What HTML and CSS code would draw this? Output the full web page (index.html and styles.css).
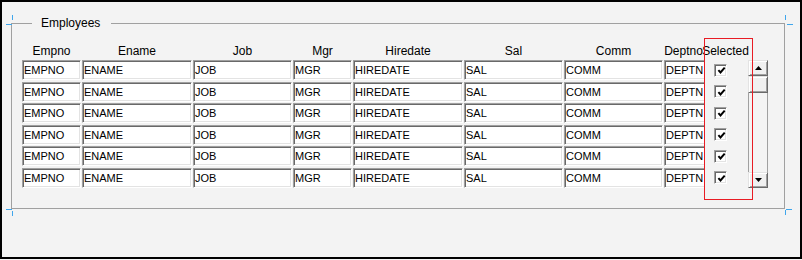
FILE: index.html
```html
<!DOCTYPE html>
<html>
<head>
<meta charset="utf-8">
<title>Employees</title>
<link rel="stylesheet" href="styles.css">
</head>
<body>
<div class="window">
  <fieldset class="group">
    <legend class="group-title">Employees</legend>
    <div class="grid">
      <div class="head">Empno</div>
      <div class="head">Ename</div>
      <div class="head">Job</div>
      <div class="head">Mgr</div>
      <div class="head">Hiredate</div>
      <div class="head">Sal</div>
      <div class="head">Comm</div>
      <div class="head">Deptno</div>
      <div class="head">Selected</div>
      <div class="head"></div>

      <div class="cell">EMPNO</div><div class="cell">ENAME</div><div class="cell">JOB</div><div class="cell">MGR</div><div class="cell">HIREDATE</div><div class="cell">SAL</div><div class="cell">COMM</div><div class="clip"><div class="cell wide">DEPTN</div></div><div class="check-cell"><span class="checkbox"><svg viewBox="0 0 9 9" width="9" height="9"><path d="M1.4 4.1 L3.5 6.4 L7.7 1.7" fill="none" stroke="#000" stroke-width="2"/></svg></span></div>

      <div class="cell">EMPNO</div><div class="cell">ENAME</div><div class="cell">JOB</div><div class="cell">MGR</div><div class="cell">HIREDATE</div><div class="cell">SAL</div><div class="cell">COMM</div><div class="clip"><div class="cell wide">DEPTN</div></div><div class="check-cell"><span class="checkbox"><svg viewBox="0 0 9 9" width="9" height="9"><path d="M1.4 4.1 L3.5 6.4 L7.7 1.7" fill="none" stroke="#000" stroke-width="2"/></svg></span></div>

      <div class="cell">EMPNO</div><div class="cell">ENAME</div><div class="cell">JOB</div><div class="cell">MGR</div><div class="cell">HIREDATE</div><div class="cell">SAL</div><div class="cell">COMM</div><div class="clip"><div class="cell wide">DEPTN</div></div><div class="check-cell"><span class="checkbox"><svg viewBox="0 0 9 9" width="9" height="9"><path d="M1.4 4.1 L3.5 6.4 L7.7 1.7" fill="none" stroke="#000" stroke-width="2"/></svg></span></div>

      <div class="cell">EMPNO</div><div class="cell">ENAME</div><div class="cell">JOB</div><div class="cell">MGR</div><div class="cell">HIREDATE</div><div class="cell">SAL</div><div class="cell">COMM</div><div class="clip"><div class="cell wide">DEPTN</div></div><div class="check-cell"><span class="checkbox"><svg viewBox="0 0 9 9" width="9" height="9"><path d="M1.4 4.1 L3.5 6.4 L7.7 1.7" fill="none" stroke="#000" stroke-width="2"/></svg></span></div>

      <div class="cell">EMPNO</div><div class="cell">ENAME</div><div class="cell">JOB</div><div class="cell">MGR</div><div class="cell">HIREDATE</div><div class="cell">SAL</div><div class="cell">COMM</div><div class="clip"><div class="cell wide">DEPTN</div></div><div class="check-cell"><span class="checkbox"><svg viewBox="0 0 9 9" width="9" height="9"><path d="M1.4 4.1 L3.5 6.4 L7.7 1.7" fill="none" stroke="#000" stroke-width="2"/></svg></span></div>

      <div class="cell">EMPNO</div><div class="cell">ENAME</div><div class="cell">JOB</div><div class="cell">MGR</div><div class="cell">HIREDATE</div><div class="cell">SAL</div><div class="cell">COMM</div><div class="clip"><div class="cell wide">DEPTN</div></div><div class="check-cell"><span class="checkbox"><svg viewBox="0 0 9 9" width="9" height="9"><path d="M1.4 4.1 L3.5 6.4 L7.7 1.7" fill="none" stroke="#000" stroke-width="2"/></svg></span></div>

      <div class="scrollbar">
        <div class="sb-btn"><svg width="7" height="4" viewBox="0 0 7 4"><polygon points="3.5,0 7,4 0,4" fill="#000"/></svg></div>
        <div class="sb-thumb"></div>
        <div class="sb-track"></div>
        <div class="sb-btn sb-down"><svg width="7" height="4" viewBox="0 0 7 4"><polygon points="0,0 7,0 3.5,4" fill="#000"/></svg></div>
      </div>

      <div class="selection"></div>
    </div>
  </fieldset>

  <span class="mark mh m-tl-h"></span>
  <span class="mark mv m-tl-v"></span>
  <span class="mark mh m-tr-h"></span>
  <span class="mark mv m-tr-v"></span>
  <span class="mark mh m-bl-h"></span>
  <span class="mark mv m-bl-v"></span>
  <span class="mark mh m-br-h"></span>
  <span class="mark mv m-br-v"></span>
</div>
</body>
</html>
```
FILE: styles.css
```css
html, body {
  margin: 0;
  padding: 0;
  background: #f3f3f3;
}

body {
  font-family: "Liberation Sans", Arial, sans-serif;
  color: #000;
}

.window {
  position: relative;
  box-sizing: border-box;
  width: 802px;
  height: 259px;
  border: 2px solid #000;
  background: #f3f3f3;
  overflow: hidden;
}

.group {
  box-sizing: border-box;
  width: 774px;
  margin: 15px 0 0 9px;
  padding: 13px 10px 20.5px 10px;
  border: 1px solid #a0a0a0;
  min-inline-size: 0;
}

.group-title {
  margin-left: 10px;
  padding: 0 11px 0 9px;
  font-size: 12px;
  line-height: 13px;
  height: 13px;
}

.grid {
  position: relative;
  display: grid;
  grid-template-columns: 60px 111px 100px 60px 111px 100px 100px 40px 44px 20px;
  grid-template-rows: 15.5px repeat(6, 20px);
  row-gap: 1.5px;
  width: 746px;
}

.head {
  display: flex;
  justify-content: center;
  align-items: flex-end;
  font-size: 12px;
  line-height: 15px;
  white-space: nowrap;
  overflow: visible;
  padding-right: 1px;
}

.cell {
  box-sizing: border-box;
  width: calc(100% - 1px);
  height: 20px;
  background: #fff;
  border: 1px solid;
  border-color: #a0a0a0 #fff #fff #a0a0a0;
  box-shadow: inset 1px 1px 0 #696969, inset -1px -1px 0 #e3e3e3;
  padding: 1px 0 0 1px;
  font-size: 11px;
  line-height: 16px;
  white-space: nowrap;
  overflow: hidden;
}

.clip {
  overflow: hidden;
  height: 20px;
}

.cell.wide {
  width: 59px;
}

.check-cell {
  display: flex;
  align-items: center;
  padding-left: 10px;
}

.checkbox {
  box-sizing: border-box;
  display: flex;
  align-items: center;
  justify-content: center;
  width: 13px;
  height: 13px;
  background: #fff;
  border: 1px solid;
  border-color: #a0a0a0 #fff #fff #a0a0a0;
  box-shadow: inset 1px 1px 0 #696969, inset -1px -1px 0 #e3e3e3;
  padding: 1px 0 0 1px;
}

.checkbox svg {
  display: block;
}

.scrollbar {
  grid-column: 10;
  grid-row: 2 / span 6;
  display: flex;
  flex-direction: column;
  box-sizing: border-box;
  width: 20px;
}

.sb-btn,
.sb-thumb {
  box-sizing: border-box;
  display: flex;
  align-items: center;
  justify-content: center;
  background: #f0f0f0;
  border: 1px solid;
  border-color: #e3e3e3 #696969 #696969 #e3e3e3;
  box-shadow: inset 1px 1px 0 #fff, inset -1px -1px 0 #a0a0a0;
}

.sb-btn {
  height: 16px;
  flex: none;
}

.sb-btn svg {
  display: block;
}

.sb-down {
  height: 15.5px;
}

.sb-thumb {
  height: 17px;
  flex: none;
}

.sb-track {
  flex: 1;
  background: #f4f4f4;
  border-left: 1px solid #a0a0a0;
  border-right: 1px solid #a0a0a0;
}

.selection {
  position: absolute;
  left: 682px;
  top: -5px;
  width: 49px;
  height: 162px;
  box-sizing: border-box;
  border: 1px solid #e81c24;
  pointer-events: none;
}

.mark {
  position: absolute;
  background: #3fa6ec;
}

.mh {
  width: 6px;
  height: 1px;
}

.mv {
  width: 1px;
  height: 5px;
}

.m-tl-h { left: 4px; top: 22px; }
.m-tl-v { left: 10px; top: 13px; }
.m-tr-h { left: 785px; top: 22px; }
.m-tr-v { left: 783px; top: 13px; }
.m-bl-h { left: 4px; top: 207px; }
.m-bl-v { left: 10px; top: 209px; }
.m-br-h { left: 784px; top: 207px; }
.m-br-v { left: 783px; top: 208px; }
```
